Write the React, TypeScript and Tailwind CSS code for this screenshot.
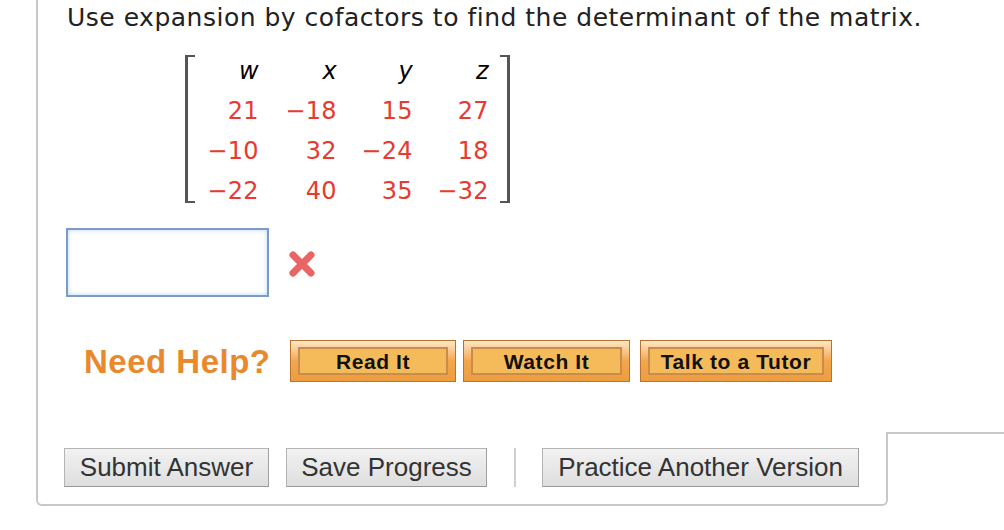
import React from "react";

const RED = "text-[#e63b2e]";

function Cell({ v, italic }: { v: string; italic?: boolean }) {
  return (
    <div className={`text-right ${italic ? "italic text-black" : RED}`}>{v}</div>
  );
}

function OrangeBtn({ label, w }: { label: string; w: string }) {
  return (
    <div
      className={`${w} h-[42px] border border-[#b8742f] bg-gradient-to-b from-[#fde7c4] via-[#f3a64c] to-[#ee9d40] px-[7px] pt-[6px] pb-[6px] flex`}
    >
      <div className="flex-1 border-2 border-[#c88c4c] bg-[#f5bb5b] flex items-center justify-center">
        <span
          className="text-[21px] tracking-[0.6px] leading-none font-bold text-[#111]"
          style={{ fontFamily: '"Liberation Sans", Arial, sans-serif' }}
        >
          {label}
        </span>
      </div>
    </div>
  );
}

function GrayBtn({ label, w }: { label: string; w: string }) {
  return (
    <div
      className={`${w} h-[39px] border border-[#b5b5b5] border-b-[#999] border-r-[#a0a0a0] bg-gradient-to-b from-[#f2f2f2] to-[#dedede] flex items-center justify-center text-[26px] text-[#333]`}
      style={{ fontFamily: '"Liberation Sans", Arial, sans-serif' }}
    >
      {label}
    </div>
  );
}

export default function App() {
  const rows = [
    ["21", "−18", "15", "27"],
    ["−10", "32", "−24", "18"],
    ["−22", "40", "35", "−32"],
  ];
  return (
    <div
      className="w-[1004px] h-[530px] bg-white overflow-hidden flex"
      style={{ fontFamily: '"DejaVu Sans", Verdana, sans-serif' }}
    >
      <div className="ml-[36px] w-[852px] h-[506px] flex flex-col">
        <div className="h-[432px] border-l-2 border-[#c8c8c8] flex flex-col">
          <div className="pl-[29px] pt-[2px] text-[25px] tracking-[0.5px] leading-[32px] text-[#222] whitespace-nowrap">
            Use expansion by cofactors to find the determinant of the matrix.
          </div>
          <div className="mt-[17px] ml-[147px] flex text-[24px] tracking-[0.4px] leading-[40px]">
            <div className="mt-[4px] h-[148px] w-[10px] border-l-[3px] border-t-2 border-b-2 border-[#555]" />
            <div className="grid grid-cols-[64px_78px_76px_76px]">
              <Cell v="w" italic />
              <Cell v="x" italic />
              <Cell v="y" italic />
              <Cell v="z" italic />
              {rows.flat().map((v, i) => (
                <Cell key={i} v={v} />
              ))}
            </div>
            <div className="ml-[11px] mt-[4px] h-[148px] w-[10px] border-r-[3px] border-t-2 border-b-2 border-[#555]" />
          </div>
          <div className="mt-[17px] ml-[28px] flex items-center">
            <div className="w-[203px] h-[69px] border-2 border-[#7b9cc7] bg-white shadow-[inset_0_0_5px_#bcd6f7]" />
            <svg width="30" height="30" viewBox="0 0 30 30" className="ml-[18px] mt-[3px] blur-[0.5px]">
              <g stroke="#e85757" strokeWidth="7" strokeLinecap="round" opacity="0.92">
                <line x1="6" y1="6" x2="24" y2="24" />
                <line x1="24" y1="6" x2="6" y2="24" />
              </g>
            </svg>
          </div>
          <div className="mt-[43px] ml-[46px] flex items-center">
            <span
              className="text-[33px] tracking-[0.5px] font-bold text-[#e8892e] leading-none w-[206px]"
              style={{ fontFamily: '"Liberation Sans", Arial, sans-serif' }}
            >
              Need Help?
            </span>
            <OrangeBtn label="Read It" w="w-[166px]" />
            <div className="ml-[7px]">
              <OrangeBtn label="Watch It" w="w-[167px]" />
            </div>
            <div className="ml-[10px]">
              <OrangeBtn label="Talk to a Tutor" w="w-[192px]" />
            </div>
          </div>
        </div>
        <div className="h-[74px] border-l-2 border-r-2 border-b-2 border-[#c8c8c8] rounded-b-[6px] flex items-start pt-[16px] pl-[26px]">
          <GrayBtn label="Submit Answer" w="w-[205px]" />
          <div className="ml-[17px]">
            <GrayBtn label="Save Progress" w="w-[201px]" />
          </div>
          <div className="ml-[27px] w-[2px] h-[39px] bg-[#cfcfcf]" />
          <div className="ml-[26px]">
            <GrayBtn label="Practice Another Version" w="w-[317px]" />
          </div>
        </div>
      </div>
      <div className="flex-1 mt-[432px] h-0 border-t-2 border-[#c8c8c8] -ml-[2px]" />
    </div>
  );
}
